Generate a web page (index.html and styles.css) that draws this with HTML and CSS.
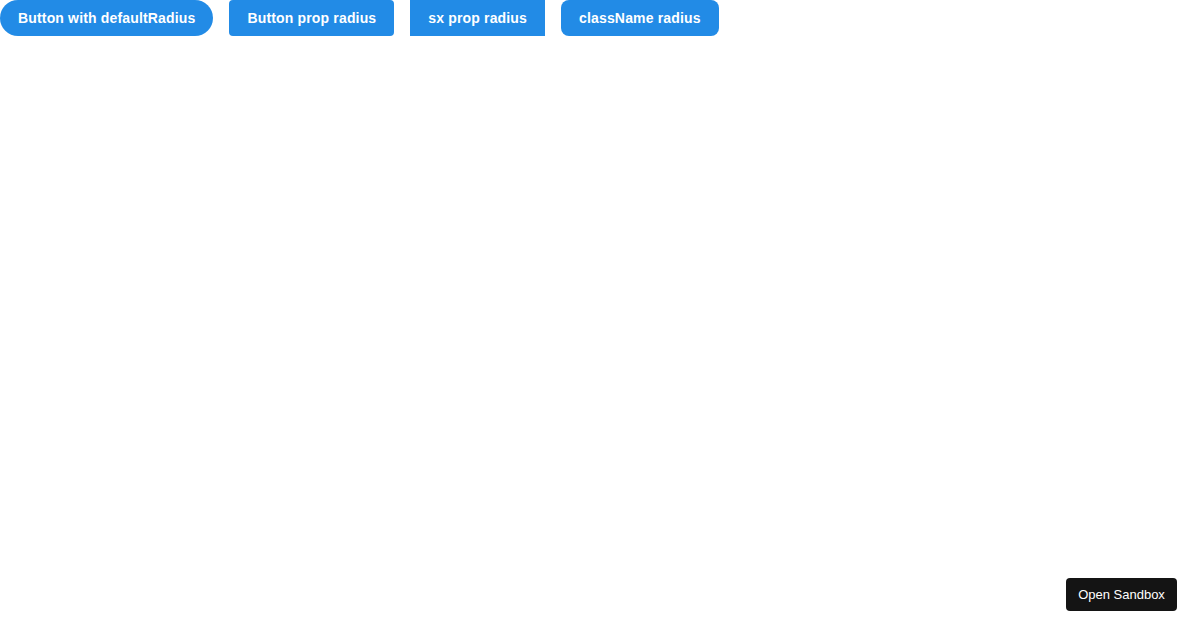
FILE: index.html
```html
<!DOCTYPE html>
<html>
<head>
<meta charset="utf-8">
<link rel="stylesheet" href="styles.css">
</head>
<body>
<div class="row">
  <button class="btn r-xl">Button with defaultRadius</button>
  <button class="btn r-sm">Button prop radius</button>
  <button class="btn r-0">sx prop radius</button>
  <button class="btn r-md">className radius</button>
</div>
<a class="sandbox">Open Sandbox</a>
</body>
</html>
```
FILE: styles.css
```css
html, body {
  margin: 0;
  padding: 0;
  background: #fff;
  font-family: "Liberation Sans", Arial, sans-serif;
}
.row {
  display: flex;
  gap: 16px;
}
.btn {
  height: 36px;
  padding: 0 18px;
  border: none;
  background: #228be6;
  color: #fff;
  font-family: "Liberation Sans", Arial, sans-serif;
  font-size: 14px;
  font-weight: 700;
  letter-spacing: 0.16px;
  line-height: 1;
  cursor: pointer;
}
.r-xl { border-radius: 32px; }
.r-sm { border-radius: 4px; }
.r-0 { border-radius: 0; }
.r-md { border-radius: 8px; }
.sandbox {
  position: fixed;
  right: 23px;
  bottom: 19px;
  width: 111px;
  height: 33px;
  box-sizing: border-box;
  display: flex;
  align-items: center;
  justify-content: center;
  background: #141414;
  color: #fff;
  font-size: 13px;
  border-radius: 4px;
}
```
